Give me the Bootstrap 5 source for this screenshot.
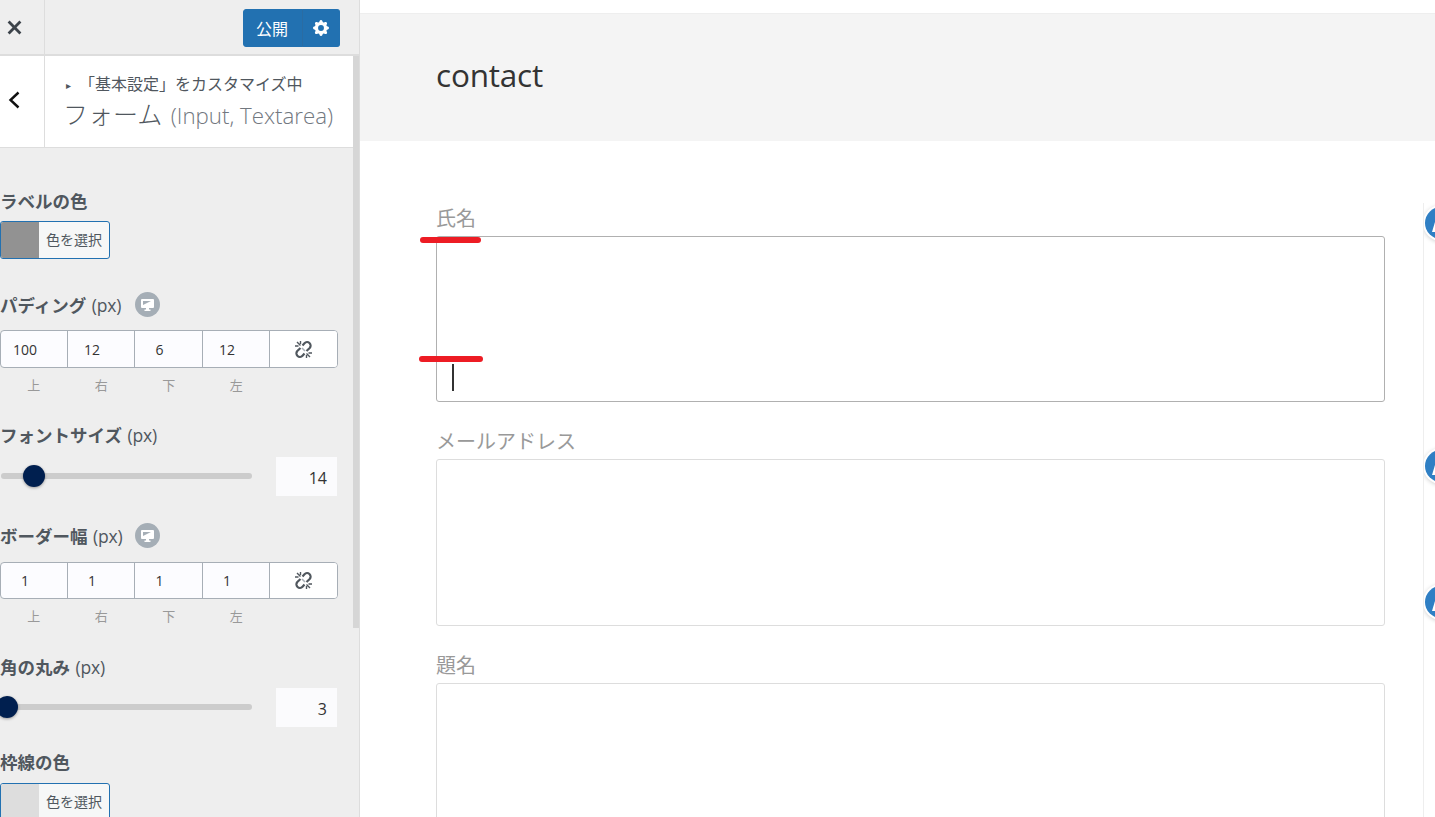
<!DOCTYPE html>
<html lang="ja">
<head>
<meta charset="utf-8">
<title>contact</title>
<link href="https://cdn.jsdelivr.net/npm/bootstrap@5.3.0/dist/css/bootstrap.min.css" rel="stylesheet">
<style>
html,body{height:817px;overflow:hidden}
body{font-family:"Open Sans","Noto Sans CJK JP",sans-serif;color:#333;background:#fff}
.shell{height:817px;width:1435px;overflow:hidden}
.side{width:360px;flex:none;background:#eee;border-right:1px solid #ddd;height:817px;overflow:hidden}
.topbar{height:56px;border-bottom:2px solid #ddd}
.closecell{width:45px;height:54px;border-right:1px solid #ddd;color:#3c434a}
.pub{margin-right:19px;height:38px;margin-top:2px}
.pub .btn{background:#2271b1;border-color:#2271b1;color:#fff;font-size:16px;line-height:1;padding:0;height:38px;display:flex;align-items:center;justify-content:center;border-radius:3px}
.pub .pubtxt{width:60px;padding-top:1px;padding-right:2px;border-top-right-radius:0;border-bottom-right-radius:0}
.pub .pubgear{width:38px;border-left-color:#2a6ca3;border-top-left-radius:0;border-bottom-left-radius:0}
.sidebody{height:761px}
.sidecol{width:353px;flex:none}
.sectionhead{height:92px;background:#fff;border-bottom:1px solid #ddd}
.backcell{width:45px;border-right:1px solid #ddd;padding-bottom:3px}
.crumb{font-size:16px;line-height:20px;color:#50575e;padding-top:18px;padding-left:21px;white-space:nowrap}
.tri{font-size:10px;vertical-align:1px;margin-right:8px}
.ttl{font-size:25px;line-height:32px;font-weight:300;color:#50575e;padding-left:18px;margin-top:3px;white-space:nowrap}
.ttl span{font-size:22.3px;color:#72787f;margin-left:2px}
.track{width:7px;flex:none;background:#eee}
.thumbbar{height:572px;background:#d6d6d6}
.ctl{font-size:17.5px;line-height:22px;font-weight:700;color:#50575e;white-space:nowrap}
.ctl span{font-weight:500;font-size:17.5px;letter-spacing:-.2px;margin-left:1px}
.c1{margin-top:42px}
.colorbtn{width:110px;height:38px;border:1px solid #2271b1;border-radius:3px;background:#f6f7f7;margin-top:9px;overflow:hidden;font-size:14px;color:#50575e}
.swatch{width:38px;height:100%}
.sw1{background:#929292}
.sw2{background:#ddd}
.colorbtn b{font-weight:400;padding-left:7px;padding-bottom:2px;white-space:nowrap}
.devico{width:25px;height:25px;border-radius:50%;background:#a5aeb6;margin-left:12px}
.devwide{margin-left:14px}
.devmid{margin-left:13px}
.fields{width:338px;height:38px;border:1px solid #a7aeb6;border-radius:4px;background:#fcfcff;overflow:hidden;margin-top:14px;font-size:14px;color:#333}
.shortf{height:37px}
.fcell{width:67px;flex:none;height:100%;border-right:1px solid #a7aeb6;padding-right:18px}
.fcell:nth-child(3){width:68px}
.flink{flex:1;background:#fff;height:100%}
.sublbl{width:338px;margin-top:8px;font-size:13px;line-height:18px;color:#999}
.sublbl div{width:67.5px;text-align:center}
.rng{width:251px;height:6px;border-radius:3px;background:#ccc;position:relative;margin-bottom:2px;margin-left:1px}
.knob{position:absolute;top:-8px;width:22px;height:22px;border-radius:50%;background:#001f4f;box-shadow:0 1px 3px rgba(0,0,0,.35)}
.numbox{width:61px;height:39px;background:#fbfbfd;margin-left:24px;font-size:16px;color:#333;padding-right:10px;padding-top:3px}
.canvas{width:1075px;height:817px;overflow:hidden}
.strip{height:14px;border-bottom:1px solid #eee}
.pagehead{height:127px;background:#f4f4f4;padding-left:76px}
.pagehead h1{font-size:31.5px;font-weight:400;color:#333;margin:0;line-height:1;padding-top:45px;letter-spacing:-.2px}
.formcol{width:1063px;padding-left:76px;padding-right:38px}
.fld{position:relative}
.fld label{display:block;font-size:20px;line-height:26px;color:#999;margin-bottom:4px}
.fbox{height:167px;width:949px;border:1px solid #ddd;border-radius:3px;background:#fff;padding:0}
.fbox.active{height:166px;border-color:#b0b0b0;padding:0 0 10px 15px}
.caret-bar{width:2px;height:27px;background:#333}
.redline{position:absolute;height:6px;border-radius:3px;background:#ed1c24}
.r1{left:-16px;top:31px;width:61px}
.r2{left:-17px;top:150px;width:64px}
.rail{width:12px;flex:none;border-left:1px solid #eee;height:615px;margin-top:62px;overflow:hidden}
.railbox{height:755px;width:12px;padding-top:4px}
.pin{width:32px;height:32px;border-radius:50%;background:#2f7fc4;box-shadow:0 0 0 2px #fff,0 1px 4px 2px rgba(0,0,0,.18);position:relative;margin-left:1px;overflow:hidden}
.pin svg{display:block}
</style>
</head>
<body>
<div class="shell d-flex">
  <aside class="side">
    <div class="topbar d-flex align-items-center justify-content-between">
      <div class="closecell d-flex align-items-center justify-content-center pe-3">
        <svg width="15" height="15" viewBox="0 0 14 14"><path d="M1.500 1.500l11 11M12.500 1.500l-11 11" stroke="#3c434a" stroke-width="2.600"/></svg>
      </div>
      <div class="pub btn-group">
        <button type="button" class="btn pubtxt">公開</button>
        <button type="button" class="btn pubgear">
          <svg width="16" height="16" viewBox="0 0 16 16" fill="#fff"><path d="M9.405 1.05c-.413-1.4-2.397-1.4-2.81 0l-.1.34a1.464 1.464 0 0 1-2.105.872l-.31-.17c-1.283-.698-2.686.705-1.987 1.987l.169.311c.446.82.023 1.841-.872 2.105l-.34.1c-1.4.413-1.4 2.397 0 2.81l.34.1a1.464 1.464 0 0 1 .872 2.105l-.17.31c-.698 1.283.705 2.686 1.987 1.987l.311-.169a1.464 1.464 0 0 1 2.105.872l.1.34c.413 1.4 2.397 1.4 2.81 0l.1-.34a1.464 1.464 0 0 1 2.105-.872l.31.17c1.283.698 2.686-.705 1.987-1.987l-.169-.311a1.464 1.464 0 0 1 .872-2.105l.34-.1c1.4-.413 1.4-2.397 0-2.81l-.34-.1a1.464 1.464 0 0 1-.872-2.105l.17-.31c.698-1.283-.705-2.686-1.987-1.987l-.311.169a1.464 1.464 0 0 1-2.105-.872l-.1-.34zM8 10.93a2.929 2.929 0 1 1 0-5.86 2.929 2.929 0 0 1 0 5.858z"/></svg>
        </button>
      </div>
    </div>
    <div class="sidebody d-flex">
      <div class="sidecol">
        <div class="sectionhead d-flex">
          <div class="backcell d-flex align-items-center justify-content-start ps-2">
            <svg width="12" height="18" viewBox="0 0 12 18"><path d="M10.500 1.500L2.500 9l8 7.500" fill="none" stroke="#111" stroke-width="2.400"/></svg>
          </div>
          <div>
            <div class="crumb"><span class="tri">▸</span>「基本設定」をカスタマイズ中</div>
            <div class="ttl">フォーム <span>(Input, Textarea)</span></div>
          </div>
        </div>

        <div class="ctl c1">ラベルの色</div>
        <div class="colorbtn d-flex align-items-center"><div class="swatch sw1"></div><b>色を選択</b></div>

        <div class="d-flex align-items-center" style="margin-top:33px">
          <div class="ctl">パディング <span>(px)</span></div>
          <div class="devico devwide d-flex align-items-center justify-content-center"><svg width="13" height="12" viewBox="0 0 13 12" fill="#fff"><path d="M1 0h11a1 1 0 0 1 1 1v7a1 1 0 0 1-1 1H8v1.5h1.5V12h-6v-1.500H5V9H1a1 1 0 0 1-1-1V1a1 1 0 0 1 1-1zm1 2v4l8-4z"/></svg></div>
        </div>
        <div class="fields d-flex" style="margin-top:13px">
          <div class="fcell d-flex align-items-center justify-content-center">100</div>
          <div class="fcell d-flex align-items-center justify-content-center">12</div>
          <div class="fcell d-flex align-items-center justify-content-center">6</div>
          <div class="fcell d-flex align-items-center justify-content-center">12</div>
          <div class="flink d-flex align-items-center justify-content-center"><svg width="19" height="19" viewBox="0 0 19 19" fill="none" stroke="#50575e" stroke-width="2.200"><path d="M8.500 5.500l2-2.200a3.400 3.400 0 0 1 5.200 4.700l-3.200 3"/><path d="M10.500 13.500l-2 2.200a3.400 3.400 0 0 1-5.200-4.700l3.200-3"/><path d="M3 2l3.500 3.500M1 6h3.500M6.500 1v3M16 17l-3.500-3.500M18 13h-3.500M12.500 18v-3" stroke-width="1.400"/><path d="M8 8l3 3" stroke="#aab1b8" stroke-width="1.600"/></svg></div>
        </div>
        <div class="sublbl d-flex"><div>上</div><div>右</div><div>下</div><div>左</div></div>

        <div class="ctl" style="margin-top:30px">フォントサイズ <span>(px)</span></div>
        <div class="d-flex align-items-center" style="margin-top:11px">
          <div class="rng"><div class="knob" style="left:22px"></div></div>
          <div class="numbox d-flex align-items-center justify-content-end">14</div>
        </div>

        <div class="d-flex align-items-center" style="margin-top:27px">
          <div class="ctl">ボーダー幅 <span>(px)</span></div>
          <div class="devico devmid d-flex align-items-center justify-content-center"><svg width="13" height="12" viewBox="0 0 13 12" fill="#fff"><path d="M1 0h11a1 1 0 0 1 1 1v7a1 1 0 0 1-1 1H8v1.5h1.5V12h-6v-1.500H5V9H1a1 1 0 0 1-1-1V1a1 1 0 0 1 1-1zm1 2v4l8-4z"/></svg></div>
        </div>
        <div class="fields shortf d-flex" style="margin-top:14px">
          <div class="fcell d-flex align-items-center justify-content-center">1</div>
          <div class="fcell d-flex align-items-center justify-content-center">1</div>
          <div class="fcell d-flex align-items-center justify-content-center">1</div>
          <div class="fcell d-flex align-items-center justify-content-center">1</div>
          <div class="flink d-flex align-items-center justify-content-center"><svg width="19" height="19" viewBox="0 0 19 19" fill="none" stroke="#50575e" stroke-width="2.200"><path d="M8.500 5.500l2-2.200a3.400 3.400 0 0 1 5.200 4.700l-3.200 3"/><path d="M10.500 13.500l-2 2.200a3.400 3.400 0 0 1-5.200-4.700l3.200-3"/><path d="M3 2l3.500 3.500M1 6h3.500M6.500 1v3M16 17l-3.500-3.500M18 13h-3.500M12.500 18v-3" stroke-width="1.400"/><path d="M8 8l3 3" stroke="#aab1b8" stroke-width="1.600"/></svg></div>
        </div>
        <div class="sublbl d-flex"><div>上</div><div>右</div><div>下</div><div>左</div></div>

        <div class="ctl" style="margin-top:31px">角の丸み <span>(px)</span></div>
        <div class="d-flex align-items-center" style="margin-top:10px">
          <div class="rng"><div class="knob" style="left:-5px"></div></div>
          <div class="numbox d-flex align-items-center justify-content-end">3</div>
        </div>

        <div class="ctl" style="margin-top:24px">枠線の色</div>
        <div class="colorbtn d-flex align-items-center" style="margin-top:10px"><div class="swatch sw2"></div><b>色を選択</b></div>
      </div>
      <div class="track"><div class="thumbbar"></div></div>
    </div>
  </aside>

  <main class="canvas">
    <div class="strip"></div>
    <div class="pagehead"><h1>contact</h1></div>
    <div class="d-flex">
      <div class="formcol">
        <div class="fld" style="margin-top:65px">
          <label>氏名</label>
          <div class="fbox active d-flex align-items-end"><div class="caret-bar"></div></div>
          <div class="redline r1"></div>
          <div class="redline r2"></div>
        </div>
        <div class="fld" style="margin-top:27px">
          <label>メールアドレス</label>
          <div class="fbox"></div>
        </div>
        <div class="fld" style="margin-top:27px">
          <label>題名</label>
          <div class="fbox"></div>
        </div>
      </div>
      <div class="rail">
        <div class="railbox">
          <div class="pin"><svg width="32" height="32" viewBox="0 0 32 32" fill="#fff"><path d="M7 25l3-10 3-7h19v17z"/></svg></div>
          <div class="pin" style="margin-top:211px"><svg width="32" height="32" viewBox="0 0 32 32" fill="#fff"><path d="M7 25l3-10 3-7h19v17z"/></svg></div>
          <div class="pin" style="margin-top:104px"><svg width="32" height="32" viewBox="0 0 32 32" fill="#fff"><path d="M7 25l3-10 3-7h19v17z"/></svg></div>
        </div>
      </div>
    </div>
  </main>
</div>
<script src="https://cdn.jsdelivr.net/npm/bootstrap@5.3.0/dist/js/bootstrap.bundle.min.js"></script>
</body>
</html>
